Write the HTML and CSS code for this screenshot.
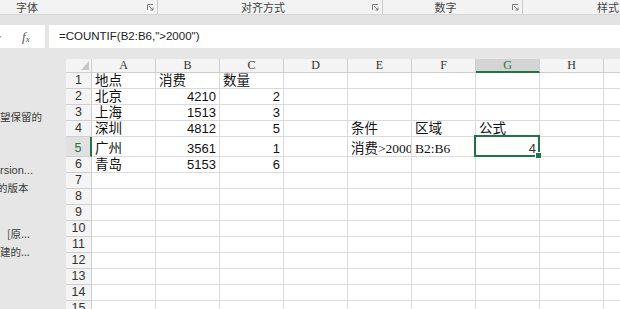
FILE: index.html
```html
<!DOCTYPE html>
<html lang="zh-CN">
<head>
    <meta charset="UTF-8">
    <title>COUNTIF</title>
    <link rel="stylesheet" href="styles.css">
</head>
<body>

    <div class="ribbon">
        <div class="group g-font">
            <span class="name">字体</span>
            <span class="launch"><svg width="7" height="7" viewBox="0 0 7 7"><path d="M0.5 6V0.5H6" fill="none" stroke="#7a7a7a"/><path d="M2 2L6 6M6 3.5V6H3.5" fill="none" stroke="#7a7a7a"/></svg></span>
        </div>
        <div class="group g-align">
            <span class="name">对齐方式</span>
            <span class="launch"><svg width="7" height="7" viewBox="0 0 7 7"><path d="M0.5 6V0.5H6" fill="none" stroke="#7a7a7a"/><path d="M2 2L6 6M6 3.5V6H3.5" fill="none" stroke="#7a7a7a"/></svg></span>
        </div>
        <div class="group g-num">
            <span class="name">数字</span>
            <span class="launch"><svg width="7" height="7" viewBox="0 0 7 7"><path d="M0.5 6V0.5H6" fill="none" stroke="#7a7a7a"/><path d="M2 2L6 6M6 3.5V6H3.5" fill="none" stroke="#7a7a7a"/></svg></span>
        </div>
        <div class="group g-style">
            <span class="name">样式</span>
        </div>
    </div>
    <div class="strip"></div>

    <div class="fbar">
        <div class="fbox">
            <span class="drop">&#9662;</span>
            <span class="fx"><i>f</i><sub>x</sub></span>
        </div>
        <div class="finput">=COUNTIF(B2:B6,"&gt;2000")</div>
    </div>

    <div class="main">
        <aside class="pane">
            <p class="l1">望保留的</p>
            <p class="l2">rsion...</p>
            <p class="l3">的版本</p>
            <p class="l4">[原...</p>
            <p class="l5">建的...</p>
        </aside>

        <div class="sheet">
            <!-- header -->
            <div class="corner"><span class="tri"></span></div>
            <div class="ch">A</div><div class="ch">B</div><div class="ch">C</div><div class="ch">D</div>
            <div class="ch">E</div><div class="ch">F</div><div class="ch cur">G</div><div class="ch">H</div><div class="ch last"></div>

            <div class="rh">1</div>
            <div class="c">地点</div><div class="c">消费</div><div class="c">数量</div><div class="c"></div>
            <div class="c"></div><div class="c"></div><div class="c"></div><div class="c"></div><div class="c last"></div>

            <div class="rh">2</div>
            <div class="c">北京</div><div class="c num">4210</div><div class="c num">2</div><div class="c"></div>
            <div class="c"></div><div class="c"></div><div class="c"></div><div class="c"></div><div class="c last"></div>

            <div class="rh">3</div>
            <div class="c">上海</div><div class="c num">1513</div><div class="c num">3</div><div class="c"></div>
            <div class="c"></div><div class="c"></div><div class="c"></div><div class="c"></div><div class="c last"></div>

            <div class="rh">4</div>
            <div class="c">深圳</div><div class="c num">4812</div><div class="c num">5</div><div class="c"></div>
            <div class="c">条件</div><div class="c">区域</div><div class="c">公式</div><div class="c"></div><div class="c last"></div>

            <div class="rh cur">5</div>
            <div class="c">广州</div><div class="c num">3561</div><div class="c num">1</div><div class="c"></div>
            <div class="c">消费&gt;2000</div><div class="c">B2:B6</div><div class="c num sel">4</div><div class="c"></div><div class="c last"></div>

            <div class="rh">6</div>
            <div class="c">青岛</div><div class="c num">5153</div><div class="c num">6</div><div class="c"></div>
            <div class="c"></div><div class="c"></div><div class="c"></div><div class="c"></div><div class="c last"></div>

            <div class="rh">7</div>
            <div class="c"></div><div class="c"></div><div class="c"></div><div class="c"></div>
            <div class="c"></div><div class="c"></div><div class="c"></div><div class="c"></div><div class="c last"></div>

            <div class="rh">8</div>
            <div class="c"></div><div class="c"></div><div class="c"></div><div class="c"></div>
            <div class="c"></div><div class="c"></div><div class="c"></div><div class="c"></div><div class="c last"></div>

            <div class="rh">9</div>
            <div class="c"></div><div class="c"></div><div class="c"></div><div class="c"></div>
            <div class="c"></div><div class="c"></div><div class="c"></div><div class="c"></div><div class="c last"></div>

            <div class="rh">10</div>
            <div class="c"></div><div class="c"></div><div class="c"></div><div class="c"></div>
            <div class="c"></div><div class="c"></div><div class="c"></div><div class="c"></div><div class="c last"></div>

            <div class="rh">11</div>
            <div class="c"></div><div class="c"></div><div class="c"></div><div class="c"></div>
            <div class="c"></div><div class="c"></div><div class="c"></div><div class="c"></div><div class="c last"></div>

            <div class="rh">12</div>
            <div class="c"></div><div class="c"></div><div class="c"></div><div class="c"></div>
            <div class="c"></div><div class="c"></div><div class="c"></div><div class="c"></div><div class="c last"></div>

            <div class="rh">13</div>
            <div class="c"></div><div class="c"></div><div class="c"></div><div class="c"></div>
            <div class="c"></div><div class="c"></div><div class="c"></div><div class="c"></div><div class="c last"></div>

            <div class="rh">14</div>
            <div class="c"></div><div class="c"></div><div class="c"></div><div class="c"></div>
            <div class="c"></div><div class="c"></div><div class="c"></div><div class="c"></div><div class="c last"></div>

            <div class="rh">15</div>
            <div class="c"></div><div class="c"></div><div class="c"></div><div class="c"></div>
            <div class="c"></div><div class="c"></div><div class="c"></div><div class="c"></div><div class="c last"></div>
        </div>
    </div>

</body>
</html>
```

FILE: styles.css
```css
* {
    box-sizing: border-box;
}
body {
    margin: 0;
    width: 620px;
    height: 309px;
    overflow: hidden;
    background-color: #e6e6e6;
    font-family: "Noto Sans CJK SC", sans-serif;
    color: #222;
}

/* ribbon group labels */
.ribbon {
    display: flex;
    height: 15px;
    background-color: #f3f3f3;
    border-bottom: 1px solid #d6d6d6;
    overflow: hidden;
}
.group {
    display: flex;
    align-items: center;
    flex-shrink: 0;
    height: 14px;
    border-right: 1px solid #c9c9c9;
}
.group .name {
    flex: 1;
    text-align: center;
    font-size: 11px;
    line-height: 14px;
    color: #444;
}
.group .launch {
    width: 14px;
    display: flex;
    justify-content: center;
    align-items: center;
}
.g-font {
    width: 247px;
    margin-left: -89px;
}
.g-align {
    width: 225px;
}
.g-num {
    width: 140px;
}
.g-style {
    width: 170px;
    border-right: none;
}
.strip {
    height: 10px;
    background-color: #e3e3e3;
}

/* formula bar */
.fbar {
    display: flex;
    gap: 4px;
    height: 23px;
}
.fbox {
    width: 45px;
    background-color: #fff;
    display: flex;
    align-items: center;
}
.fbox .drop {
    margin-left: -4px;
    font-size: 10px;
    color: #888;
}
.fbox .fx {
    margin-left: 21px;
    font-family: "Liberation Serif", serif;
    font-size: 13px;
    color: #555;
}
.fbox .fx sub {
    font-size: 9px;
    vertical-align: -1px;
    font-style: italic;
}
.finput {
    flex: 1;
    background-color: #fff;
    padding-left: 10px;
    font-family: "Liberation Sans", sans-serif;
    font-size: 11.5px;
    line-height: 23px;
    color: #222;
}

/* body: recovery pane + sheet */
.main {
    display: flex;
    margin-top: 11px;
    height: 250px;
    overflow: hidden;
}
.pane {
    width: 66px;
    flex-shrink: 0;
    padding-top: 49px;
    font-size: 10.5px;
    color: #3a3a3a;
    overflow: hidden;
    white-space: nowrap;
}
.pane p {
    margin: 0;
    line-height: 17px;
}
.pane .l2 {
    margin-top: 37px;
    font-family: "Liberation Sans", sans-serif;
    font-size: 11px;
}
.pane .l3 {
    text-indent: -3px;
}
.pane .l4 {
    margin-top: 29px;
    padding-left: 7px;
}
.pane .l5 {
    margin-top: 1px;
}

.sheet {
    flex: 1;
    display: grid;
    grid-template-columns: 26px repeat(8, 64px) 1fr;
    grid-template-rows: 14px repeat(4, 16px) 20px;
    grid-auto-rows: 16px;
    background-color: #fff;
    font-family: "Liberation Serif", "Noto Sans CJK SC", serif;
    font-size: 13.5px;
}
.corner, .ch, .rh {
    background-color: #f4f4f4;
    border-right: 1px solid #cfcfcf;
    border-bottom: 1px solid #cfcfcf;
    color: #333;
}
.corner {
    display: flex;
    justify-content: flex-end;
    align-items: flex-end;
    padding: 0 2px 2px 0;
}
.corner .tri {
    width: 0;
    height: 0;
    border-left: 8px solid transparent;
    border-bottom: 9px solid #c6c6c6;
}
.ch {
    text-align: center;
    font-family: "Liberation Serif", serif;
    font-size: 12px;
    line-height: 13px;
}
.ch.cur {
    background-color: #d4d4d4;
    color: #217346;
    border-bottom: 2px solid #217346;
}
.rh {
    display: flex;
    justify-content: center;
    align-items: flex-end;
    font-family: "Liberation Sans", sans-serif;
    font-size: 12.5px;
    line-height: 15px;
}
.rh.cur {
    background-color: #e1e1e1;
    color: #217346;
    border-right: 2px solid #217346;
}
.c {
    display: flex;
    align-items: flex-end;
    padding: 0 3px 0 3px;
    border-right: 1px solid #dadada;
    border-bottom: 1px solid #dadada;
    line-height: 15px;
    white-space: nowrap;
    overflow: hidden;
    color: #111;
}
.ch.last, .c.last {
    border-right: none;
}
.num {
    justify-content: flex-end;
    font-family: "Liberation Sans", sans-serif;
    font-size: 13px;
}
.sel {
    position: relative;
    overflow: visible;
    color: #3a3227;
}
.sel::after {
    content: "";
    position: absolute;
    left: -2px;
    top: -2px;
    right: -1px;
    bottom: -1px;
    border: 2px solid #217346;
}
.sel::before {
    content: "";
    position: absolute;
    right: -3px;
    bottom: -3px;
    width: 5px;
    height: 5px;
    background-color: #217346;
    border: 1px solid #fff;
    z-index: 1;
}
```
